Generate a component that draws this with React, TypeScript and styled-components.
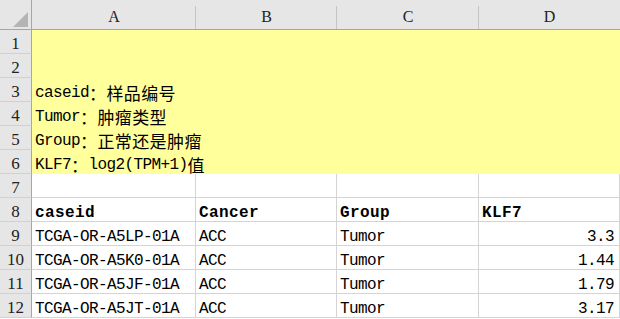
import { createGlobalStyle, styled } from 'styled-components';

const GlobalStyle = createGlobalStyle`
  html, body {
    margin: 0;
    padding: 0;
    background: #ffffff;
    overflow: hidden;
  }
`;

const Sheet = styled.div`
  display: grid;
  grid-template-columns: 32px 164px 141px 142px 1fr;
  grid-template-rows: 30px repeat(12, 24px);
  width: 620px;
  height: 319px;
  font-family: 'Liberation Mono', 'Noto Sans CJK SC', monospace;
  color: #000;
`;

const Corner = styled.div`
  position: relative;
  background: #e6e6e6;
  border-right: 1px solid #a6a6a6;
  border-bottom: 1px solid #a6a6a6;
  box-sizing: border-box;
  &::after {
    content: '';
    position: absolute;
    right: 3px;
    bottom: 2px;
    width: 0;
    height: 0;
    border-left: 15px solid transparent;
    border-bottom: 15px solid #b4b4b4;
  }
`;

const ColHead = styled.div<{ $last?: boolean }>`
  display: flex;
  align-items: flex-end;
  justify-content: center;
  padding-bottom: 3px;
  box-sizing: border-box;
  background: #e6e6e6;
  border-bottom: 1px solid #a6a6a6;
  font-family: 'Liberation Serif', serif;
  font-size: 16px;
  color: #222;
  background-image: ${(p) =>
    p.$last ? 'none' : 'linear-gradient(#c4c4c4, #c4c4c4)'};
  background-size: 1px 23px;
  background-position: right bottom;
  background-repeat: no-repeat;
`;

const RowHead = styled.div`
  display: flex;
  align-items: center;
  justify-content: center;
  box-sizing: border-box;
  background: #e6e6e6;
  border-right: 1px solid #a6a6a6;
  border-bottom: 1px solid #d0d0d0;
  font-family: 'Liberation Serif', serif;
  font-size: 17px;
  color: #222;
  padding-top: 4px;
`;

const Notes = styled.div`
  grid-column: 2 / -1;
  grid-row: 2 / 8;
  display: grid;
  grid-template-rows: repeat(6, 24px);
  background: #ffff9b;
`;

const NoteLine = styled.div`
  display: flex;
  align-items: flex-end;
  padding: 0 0 1px 3px;
  font-size: 16px;
  letter-spacing: -0.6px;
  line-height: 16px;
  white-space: nowrap;
`;

const Han = styled.span`
  font-family: 'Noto Sans CJK SC', sans-serif;
  font-size: 17px;
  letter-spacing: 0.4px;
`;

const Cell = styled.div<{ $bold?: boolean; $num?: boolean }>`
  display: flex;
  align-items: flex-end;
  justify-content: ${(p) => (p.$num ? 'flex-end' : 'flex-start')};
  box-sizing: border-box;
  padding: 0 ${(p) => (p.$num ? '5px' : '0')} 0 3px;
  border-right: 1px solid #d4d4d4;
  border-bottom: 1px solid #d4d4d4;
  font-size: 16px;
  line-height: 16px;
  font-weight: ${(p) => (p.$bold ? 700 : 400)};
  letter-spacing: ${(p) => (p.$bold ? '0.4px' : '-0.6px')};
  white-space: nowrap;
`;

const notes: [string, string][] = [
  ['', ''],
  ['', ''],
  ['caseid：', '样品编号'],
  ['Tumor：', '肿瘤类型'],
  ['Group：', '正常还是肿瘤'],
  ['KLF7：log2(TPM+1)', '值'],
];

const headers = ['caseid', 'Cancer', 'Group', 'KLF7'];

const rows = [
  ['TCGA-OR-A5LP-01A', 'ACC', 'Tumor', '3.3'],
  ['TCGA-OR-A5K0-01A', 'ACC', 'Tumor', '1.44'],
  ['TCGA-OR-A5JF-01A', 'ACC', 'Tumor', '1.79'],
  ['TCGA-OR-A5JT-01A', 'ACC', 'Tumor', '3.17'],
];

function NoteText({ latin, han }: { latin: string; han: string }) {
  if (!latin) return null;
  const [before, ...rest] = latin.split('：');
  return (
    <>
      {before}
      <Han>：</Han>
      {rest.join('：')}
      <Han>{han}</Han>
    </>
  );
}

export default function App() {
  return (
    <>
      <GlobalStyle />
      <Sheet>
        <Corner />
        {['A', 'B', 'C', 'D'].map((l, i) => (
          <ColHead key={l} $last={i === 3}>
            {l}
          </ColHead>
        ))}

        {Array.from({ length: 12 }, (_, i) => (
          <RowHead key={i} style={{ gridColumn: 1, gridRow: i + 2 }}>
            {i + 1}
          </RowHead>
        ))}

        <Notes>
          {notes.map(([latin, han], i) => (
            <NoteLine key={i}>
              <NoteText latin={latin} han={han} />
            </NoteLine>
          ))}
        </Notes>

        {[0, 1, 2, 3].map((c) => (
          <Cell key={`e${c}`} />
        ))}
        {headers.map((h) => (
          <Cell key={h} $bold>
            {h}
          </Cell>
        ))}
        {rows.map((r) =>
          r.map((v, c) => (
            <Cell key={`${r[0]}-${c}`} $num={c === 3}>
              {v}
            </Cell>
          ))
        )}
      </Sheet>
    </>
  );
}
